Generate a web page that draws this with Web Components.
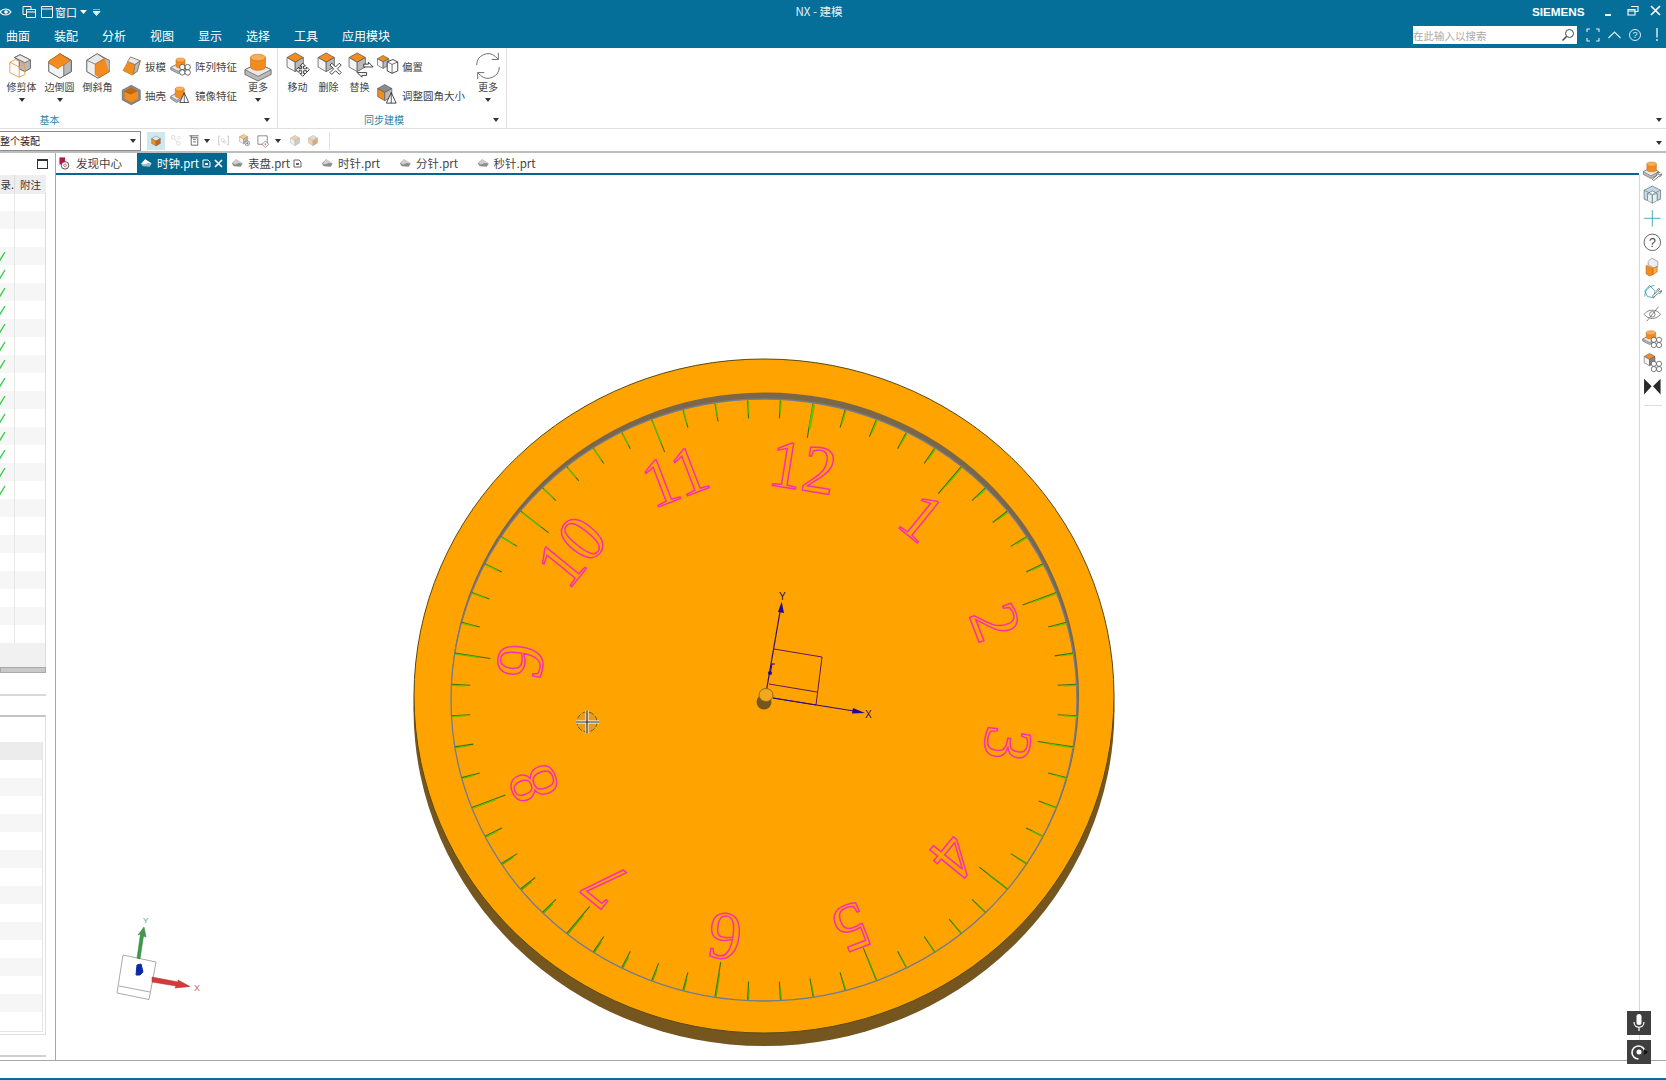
<!DOCTYPE html>
<html lang="zh">
<head>
<meta charset="utf-8">
<title>NX - 建模</title>
<style>
  html, body { margin: 0; height: 100%; background: #fff; overflow: hidden; }
  body { font-family: "Noto Sans CJK SC", "Noto Sans", sans-serif; font-size: 10px; color: #333; }
</style>
</head>
<body>
<nx-app></nx-app>
<script>
// colours shared by the icon drawings
const OR = '#f28c1e', ORL = '#f9ad55', ORD = '#c4680f', GL = '#e8e8e8', GM = '#b9b9b9', GD = '#8a8a8a', LN = '#555';

function hexPts(x, y, s) {
  const w = s * 0.87, h = s * 0.5;
  return { T: [x, y - s], UR: [x + w, y - h], LR: [x + w, y + h], B: [x, y + s], LL: [x - w, y + h], UL: [x - w, y - h], C: [x, y] };
}
const poly = (pts, fill, stroke = LN, sw = 0.8) =>
  `<polygon points="${pts.map(p => p.join(',')).join(' ')}" fill="${fill}" stroke="${stroke}" stroke-width="${sw}" stroke-linejoin="round"/>`;
function cube(x, y, s, top = OR, left = '#f4f4f4', right = GM, stroke = LN) {
  const p = hexPts(x, y, s);
  return poly([p.T, p.UR, p.C, p.UL], top, stroke) + poly([p.UL, p.C, p.B, p.LL], left, stroke) + poly([p.C, p.UR, p.LR, p.B], right, stroke);
}
function cyl(x, y, rx, h) {
  const ry = rx * 0.45;
  return `<path d="M${x - rx} ${y}v${h}a${rx} ${ry} 0 0 0 ${rx * 2} 0v${-h}z" fill="${OR}" stroke="${ORD}" stroke-width=".6"/>` +
    `<ellipse cx="${x}" cy="${y}" rx="${rx}" ry="${ry}" fill="${ORL}" stroke="${ORD}" stroke-width=".6"/>`;
}
function plate(x, y, w, h, d = 3) {
  return `<path d="M${x - w} ${y}L${x} ${y - h}L${x + w} ${y}v${d}L${x} ${y + h + d}L${x - w} ${y + d}z" fill="${GM}" stroke="${LN}" stroke-width=".8" stroke-linejoin="round"/>` +
    `<path d="M${x - w} ${y}L${x} ${y - h}L${x + w} ${y}L${x} ${y + h}z" fill="${GL}" stroke="${LN}" stroke-width=".7" stroke-linejoin="round"/>`;
}
const clover = (x, y, r) => [[-r, -r], [r, -r], [-r, r], [r, r]].map(d =>
  `<circle cx="${x + d[0]}" cy="${y + d[1]}" r="${r}" fill="#fff" stroke="#333" stroke-width=".9"/>`).join('');
const wrench = (x, y) => `<path d="M${x} ${y + 7}l7 -6a3 3 0 0 1 4 -4l-2 2 1 2 2 0 1 -2a3 3 0 0 1 -4 4l-7 6z" fill="#fff" stroke="#333" stroke-width=".9" stroke-linejoin="round"/>`;
const tri = (x, y) => `<path d="M${x} ${y - 7}L${x + 6} ${y + 6}H${x - 6}z" fill="#fff" stroke="#222" stroke-width="1"/><path d="M${x} ${y - 7}V${y + 6}" stroke="#222" stroke-width=".9"/>`;

const ICONS = {
  trim: `<path d="M3 11L14 5l11 6v9l-11 6-11-6z" fill="#fff"/>` +
    `<path d="M14 4l11 5.5v9L19 22l-6-3v-9l-5-3z" fill="${GM}" stroke="${LN}" stroke-width=".9"/><path d="M8 7l6-3 11 5.5-6 3z" fill="${GL}" stroke="${LN}" stroke-width=".8"/>` +
    `<path d="M3 12l6-3 10 5v11l-6 3-10-5zM3 12l10 5v11M13 17l6-3" fill="none" stroke="#ef9a4c" stroke-width="1"/>`,
  blend: `<path d="M16 3l12 7v12l-12 7-12-7V11z" fill="#f2f2f2" stroke="${LN}"/><path d="M16 3l12 7v12l-8 4.6V15z" fill="${GM}" stroke="${LN}" stroke-width=".8"/>` +
    `<path d="M16 3L5 10c-1 1 -1 2 -1 3c2 1 10 6 10 6c2 -2 3 -3 6 -4l7-5z" fill="${OR}" stroke="${ORD}" stroke-width=".7"/>`,
  chamfer: `<path d="M15 3l13 7v12l-12 7-12-7V10z" fill="#f0f0f0" stroke="${LN}"/><path d="M4 10l11-7 8 5-10 6z" fill="${GL}" stroke="${LN}" stroke-width=".7"/>` +
    `<path d="M23 8l5 3v11l-10 6-5-3V14z" fill="${OR}" stroke="${ORD}" stroke-width=".7"/><path d="M23 8l5 3v11z" fill="${GM}"/>`,
  draft: `<path d="M14 4l13 5-4 14-7 5-12-6z" fill="${OR}" stroke="${ORD}" stroke-width=".8"/><path d="M14 4l13 5-7 5-10-4z" fill="${GL}" stroke="${LN}" stroke-width=".7"/><path d="M27 9l-4 14-5 4 2-13z" fill="${GM}" stroke="${LN}" stroke-width=".7"/>`,
  shell: `<path d="M15 3l12 6.500v13L15 29 3 22.500v-13z" fill="${GD}" stroke="${LN}" stroke-width=".8"/><path d="M15 6l9 5v10l-9 5-9-5V11z" fill="${ORD}"/><path d="M15 15l9-4v10l-9 5-9-5V11z" fill="${OR}"/><path d="M6 11l9 4" stroke="#8a4a0a" stroke-width=".7"/>`,
  pattern: plate(11, 18, 10, 5) + cyl(14, 8, 6, 8) + clover(20, 21, 3.6),
  mirror: plate(9, 18, 8, 5) + cyl(13, 8, 6, 9) + tri(19, 20),
  more: plate(16, 20, 14, 7, 5) + cyl(16, 7, 8, 10),
  move: cube(13, 12, 10) + `<path d="M21 13l3 3h-2v3h3v-2l3 3-3 3v-2h-3v3h2l-3 3-3-3h2v-3h-3v2l-3-3 3-3v2h3v-3h-2z" fill="#fff" stroke="#222" stroke-width=".9" stroke-linejoin="round"/>`,
  del: cube(13, 12, 10) + `<path d="M17 15l2-2 4 4 4-4 2 2-4 4 4 4-2 2-4-4-4 4-2-2 4-4z" fill="#fff" stroke="#222" stroke-width=".9" stroke-linejoin="round"/>`,
  replace: cube(13, 12, 10) + `<path d="M20 14h5v-2l5 5-5 0h-5zM23 26h-5v2l-5-5 5 0h5z" fill="#fff" stroke="#222" stroke-width=".9" stroke-linejoin="round"/>`,
  offset: cube(10, 11, 8) + `<path d="M15 11l7-3 6 3v11l-7 3-6-3z" fill="#fff" stroke="#222"/><path d="M15 11l6 3 7-3M21 14v11" fill="none" stroke="#222" stroke-width=".8"/>`,
  resize: cube(12, 13, 10, GD, OR, GM) + tri(20, 20),
  refresh: `<path d="M4 15a12 12 0 0 1 20-9l3 3M28 17a12 12 0 0 1-20 9l-3-3" fill="none" stroke="#666" stroke-width="1"/><path d="M27 2v7h-7M5 30v-7h7" fill="none" stroke="#666" stroke-width="1"/>`,
  select: cube(16, 16, 10, '#e8e8e8', OR, ORD, '#666'),
  faint1: `<circle cx="9" cy="9" r="4" fill="none" stroke="#bbb"/><circle cx="20" cy="22" r="4" fill="none" stroke="#bbb"/><circle cx="21" cy="10" r="3" fill="none" stroke="#ccc"/><path d="M12 12l5 7" stroke="#bbb"/>`,
  sheet: `<path d="M5 6h20M9 6v20h14V10H9" fill="none" stroke="#333" stroke-width="1.500"/><path d="M13 14h6M13 19h6" stroke="#333" stroke-width="1.500"/>`,
  faint2: `<path d="M7 5H4v22h3M25 5h3v22h-3" fill="none" stroke="#aaa" stroke-width="1.500"/><circle cx="14" cy="15" r="4" fill="none" stroke="#c9a0a0"/><circle cx="19" cy="20" r="3" fill="none" stroke="#aaa"/>`,
  filterA: cube(14, 13, 10, '#f9c98f', '#f4f4f4', GM, '#a07030') + `<circle cx="22" cy="22" r="5" fill="#fff" stroke="#333"/><path d="M22 19v6M19 22h6" stroke="#333"/>`,
  filterB: `<path d="M4 6h20v18H4z" fill="#fff" stroke="#555" stroke-width="1.400"/><path d="M20 17l7 7-7 7-7-7z" fill="#fff" stroke="#333"/><circle cx="20" cy="24" r="2" fill="${OR}"/>`,
  ghost1: cube(15, 16, 11, '#f4d0a8', '#eee', '#ccc', '#aaa'),
  ghost2: cube(15, 16, 11, '#ddd', '#f4cfa6', '#e0a878', '#aaa'),
  discover: `<path d="M3 3h12v15H3z" fill="#b4154a"/><circle cx="15" cy="20" r="8" fill="#fff" stroke="#444" stroke-width="2"/><circle cx="15" cy="20" r="3" fill="none" stroke="#c33" stroke-width="1.500"/>`,
  part: `<path d="M13 7l14 9-4 7-15-1-4-6z" fill="#8d8d8d"/><path d="M13 7l14 9-8-1-9 3-4-2z" fill="#cfcfcf"/>`,
  partw: `<path d="M13 7l14 9-4 7-15-1-4-6z" fill="#9dbccb"/><path d="M13 7l14 9-8-1-9 3-4-2z" fill="#fff"/>`,
  // right strip
  rs1: plate(13, 17, 11, 6, 4) + cyl(14, 6, 7, 8) + wrench(15, 21),
  rs2: `<path d="M15 3l12 6v13l-5 2V14l-7-4-7 4v10l-5-2V9z" fill="#c7d6e6" stroke="#577" stroke-width="1"/><path d="M3 9l12 6 12-6" fill="none" stroke="#577" stroke-width=".9"/><path d="M8 14v10l7 4V16zM22 14v10l-7 4V16z" fill="#e8eef4" stroke="#577" stroke-width=".8"/>`,
  rs3: `<path d="M15 3v24M3 15h24" stroke="#2a9db0" stroke-width="1.200" fill="none"/>`,
  rs4: `<circle cx="15" cy="15" r="12" fill="#fff" stroke="#444" stroke-width="1.200"/><text x="15" y="21.500" text-anchor="middle" font-size="18" font-family="Liberation Sans, sans-serif" fill="#444">?</text>`,
  rs5: `<path d="M14 3l9 5v7l-5 3-9-5V8z" fill="#eee" stroke="#888"/><path d="M7 14l9 4v9l-5 2-5-3V14z" fill="${OR}" stroke="${ORD}"/><path d="M16 18l6-3v8l-6 4z" fill="${ORL}" stroke="${ORD}"/>`,
  rs6: `<path d="M4 24c0-9 6-15 14-16M8 24l-4-8M4 16l7-8 8 8-2 10-9-2" fill="none" stroke="#2a9db0" stroke-width="1.200"/>` + wrench(15, 16),
  rs7: `<path d="M3 15c6-8 18-8 24 0-6 8-18 8-24 0z" fill="#fff" stroke="#555"/><circle cx="15" cy="15" r="4" fill="none" stroke="#555"/><path d="M7 25L24 4" stroke="#555"/>`,
  rs8: plate(11, 16, 10, 5, 3) + cyl(13, 7, 7, 6) + clover(21, 21, 3.800),
  rs9: cube(11, 11, 9, OR, '#f4f4f4', GD) + clover(21, 21, 3.800),
  rs10: `<path d="M3 4l11 11L3 27zM27 4L16 15l11 12z" fill="#2a2a2a"/>`,
};

// one drawn icon; name picks the drawing, size the box in px
class NxIcon extends HTMLElement {
  connectedCallback() {
    const size = this.getAttribute('size') || 16;
    this.attachShadow({ mode: 'open' }).innerHTML = `
      <style>:host { display: inline-flex; flex: none; width: ${size}px; height: ${size}px; } svg { width: 100%; height: 100%; display: block; overflow: visible; }</style>
      <svg viewBox="0 0 32 32">${ICONS[this.getAttribute('name')] || ''}</svg>`;
  }
}
customElements.define('nx-icon', NxIcon);

class NxTitlebar extends HTMLElement {
  connectedCallback() {
    const menu = ['曲面', '装配', '分析', '视图', '显示', '选择', '工具', '应用模块'];
    this.attachShadow({ mode: 'open' }).innerHTML = `
      <style>
        :host { display: block; height: 48px; background: #056f99; color: #fff; font-size: 12px; position: relative; }
        .top { height: 24px; display: flex; align-items: center; position: relative; }
        .qa { display: flex; align-items: center; font-size: 11px; }
        .qa svg { display: block; }
        .title { position: absolute; left: 0; right: 0; text-align: center; font-size: 11.500px; color: #e6f0f4; pointer-events: none; top: 3px; padding-right: 28px; }
        .brand { position: absolute; left: 1532px; top: 5px; font: bold 11.700px "Liberation Sans", sans-serif; }
        .win { position: absolute; left: 1603px; top: 3px; display: flex; gap: 9px; }
        .menu { display: flex; height: 22px; align-items: center; padding-left: 6px; gap: 24px; }
        .menu span { white-space: nowrap; }
        .right { position: absolute; left: 1413px; top: 26px; display: flex; align-items: center; }
        .search { width: 164px; height: 18px; background: #fff; box-sizing: border-box; display: flex; align-items: center; justify-content: space-between; font-size: 10.500px; color: #aaa; padding-right: 2px; }
        .tools { display: flex; align-items: center; margin-left: 9px; gap: 5px; }
      </style>
      <div class="top">
        <div class="qa">
          <svg width="14" height="14" viewBox="0 0 14 14"><path d="M0 7c3-4 8-4 11 0-3 4-8 4-11 0z" fill="none" stroke="#fff" stroke-width="1.200"/><circle cx="6" cy="7" r="1.800" fill="#fff"/></svg>
          <svg width="16" height="14" viewBox="0 0 16 14" style="margin-left:7px"><path d="M2 1.500h8v3M2 1.500v8h3M5.500 4.500h9v8h-9zM5.500 7h9" fill="none" stroke="#fff"/></svg>
          <svg width="14" height="14" viewBox="0 0 14 14" style="margin-left:3px"><path d="M1.500 1.500h11v11h-11zM1.500 4h11" fill="none" stroke="#fff"/></svg>
          <span style="margin-left:1px">窗口</span>
          <svg width="7" height="5" viewBox="0 0 7 5" style="margin-left:3px"><path d="M0 0h7L3.500 4z" fill="#fff"/></svg>
          <svg width="8" height="7" viewBox="0 0 8 7" style="margin-left:6px"><path d="M0 0h7M0 2.500h7L3.500 6.500z" fill="none" stroke="#fff"/><path d="M1 3h5L3.500 6z" fill="#fff"/></svg>
        </div>
        <div class="title">NX - 建模</div>
        <div class="brand">SIEMENS</div>
        <div class="win">
          <svg width="14" height="16" viewBox="0 0 14 16"><path d="M2 12h6" stroke="#fff" stroke-width="2"/></svg>
          <svg width="14" height="16" viewBox="0 0 14 16"><path d="M5 3.500h7v5h-3M2 6.500h7v5.500H2zM2 8h7" fill="none" stroke="#fff" stroke-width="1.100"/></svg>
          <svg width="14" height="16" viewBox="0 0 14 16"><path d="M2 3l9 9M11 3l-9 9" stroke="#fff" stroke-width="1.700"/></svg>
        </div>
      </div>
      <div class="menu">${menu.map(m => `<span>${m}</span>`).join('')}</div>
      <div class="right">
        <div class="search"><span>在此输入以搜索</span>
          <svg width="14" height="14" viewBox="0 0 14 14"><circle cx="8.500" cy="5.500" r="4" fill="#fff" stroke="#444"/><path d="M5.500 8.500L1.500 12.500" stroke="#444" stroke-width="1.500"/></svg>
        </div>
        <div class="tools">
          <svg width="14" height="14" viewBox="0 0 14 14"><path d="M1 4V1h3M10 1h3v3M13 10v3h-3M4 13H1v-3" fill="none" stroke="#e0eef4" stroke-width="1.100"/></svg>
          <svg width="15" height="14" viewBox="0 0 15 14" style="margin-left:2px"><path d="M1.500 10L7.500 4l6 6" fill="none" stroke="#e0eef4" stroke-width="1.100"/></svg>
          <svg width="14" height="14" viewBox="0 0 14 14" style="margin-left:1px"><circle cx="7" cy="7" r="5.500" fill="none" stroke="#e0eef4"/><text x="7" y="10" font-size="9" text-anchor="middle" fill="#e0eef4" font-family="Liberation Sans, sans-serif">?</text></svg>
          <svg width="6" height="14" viewBox="0 0 6 14" style="margin-left:7px"><path d="M3 0v9.500M3 11v2" stroke="#e0eef4" stroke-width="1.400"/></svg>
        </div>
      </div>`;
  }
}
customElements.define('nx-titlebar', NxTitlebar);

// big ribbon button: icon on top, label under it, optional caret
class NxTool extends HTMLElement {
  connectedCallback() {
    const caret = this.hasAttribute('caret');
    this.attachShadow({ mode: 'open' }).innerHTML = `
      <style>
        :host { display: flex; flex-direction: column; align-items: center; flex: none; font-size: 10px; color: #444; }
        .lb { margin-top: -1px; line-height: 14px; white-space: nowrap; }
        .c { width: 0; height: 0; border: 3px solid transparent; border-top: 4px solid #333; border-bottom: 0; margin-top: 4px; }
      </style>
      <nx-icon name="${this.getAttribute('icon')}" size="${this.getAttribute('size') || 30}"></nx-icon>
      <div class="lb"><slot></slot></div>
      ${caret ? '<div class="c"></div>' : ''}`;
  }
}
customElements.define('nx-tool', NxTool);

// small ribbon button: icon left, label right
class NxSmallTool extends HTMLElement {
  connectedCallback() {
    this.attachShadow({ mode: 'open' }).innerHTML = `
      <style>
        :host { display: flex; align-items: center; gap: 1px; font-size: 10.500px; color: #444; height: 22px; white-space: nowrap; }
      </style>
      <nx-icon name="${this.getAttribute('icon')}" size="${this.getAttribute('size') || 24}"></nx-icon>
      <slot></slot>`;
  }
}
customElements.define('nx-small-tool', NxSmallTool);

class NxGroup extends HTMLElement {
  connectedCallback() {
    this.attachShadow({ mode: 'open' }).innerHTML = `
      <style>
        :host { display: flex; flex-direction: column; box-sizing: border-box; height: 80px; width: ${this.getAttribute('w')}px; border-right: 1px solid #e2e2e2; position: relative; flex: none; }
        .body { flex: 1; display: flex; align-items: flex-start; padding-top: 3px; padding-left: ${this.getAttribute('pad') || 0}px; }
        .lb { height: 15px; line-height: 13px; text-align: center; color: #2f84a6; font-size: 10px; padding-right: ${this.getAttribute('lbpad') || 0}px; }
        .c { position: absolute; right: 7px; bottom: 6px; border: 3px solid transparent; border-top: 4px solid #333; border-bottom: 0; }
      </style>
      <div class="body"><slot></slot></div>
      <div class="lb">${this.getAttribute('label')}</div>
      <div class="c"></div>`;
  }
}
customElements.define('nx-group', NxGroup);

class NxRibbon extends HTMLElement {
  connectedCallback() {
    this.attachShadow({ mode: 'open' }).innerHTML = `
      <style>
        :host { display: flex; height: 81px; box-sizing: border-box; border-bottom: 1px solid #e0e0e0; background: #fff; position: relative; }
        .stack { display: flex; flex-direction: column; gap: 7px; padding-top: 4px; flex: none; }
        .c { position: absolute; right: 4px; bottom: 6px; border: 3px solid transparent; border-top: 4px solid #333; border-bottom: 0; }
      </style>
      <nx-group w="278" label="基本" pad="6" lbpad="178">
        <nx-tool icon="trim" caret style="width:31px">修剪体</nx-tool>
        <nx-tool icon="blend" caret style="width:31px;margin-left:7px">边倒圆</nx-tool>
        <nx-tool icon="chamfer" style="width:31px;margin-left:7px">倒斜角</nx-tool>
        <div class="stack" style="margin-left:7px;width:53px">
          <nx-small-tool icon="draft">拔模</nx-small-tool>
          <nx-small-tool icon="shell">抽壳</nx-small-tool>
        </div>
        <div class="stack" style="margin-left:-3px;width:66px">
          <nx-small-tool icon="pattern">阵列特征</nx-small-tool>
          <nx-small-tool icon="mirror">镜像特征</nx-small-tool>
        </div>
        <nx-tool icon="more" caret style="width:22px;margin-left:11px">更多</nx-tool>
      </nx-group>
      <nx-group w="229" label="同步建模" pad="7" lbpad="16">
        <nx-tool icon="move" style="width:25px">移动</nx-tool>
        <nx-tool icon="del" style="width:25px;margin-left:6px">删除</nx-tool>
        <nx-tool icon="replace" style="width:25px;margin-left:6px">替换</nx-tool>
        <div class="stack" style="margin-left:3px;width:102px">
          <nx-small-tool icon="offset" size="26">偏置</nx-small-tool>
          <nx-small-tool icon="resize" size="26">调整圆角大小</nx-small-tool>
        </div>
        <nx-tool icon="refresh" caret style="width:22px">更多</nx-tool>
      </nx-group>
      <div class="c"></div>`;
  }
}
customElements.define('nx-ribbon', NxRibbon);

class NxToolbar extends HTMLElement {
  connectedCallback() {
    this.attachShadow({ mode: 'open' }).innerHTML = `
      <style>
        :host { display: flex; align-items: center; height: 24px; box-sizing: border-box; border-bottom: 2px solid #bdbdbd; padding-top: 1px; position: relative; background: #fff; }
        .combo { width: 141px; height: 20px; box-sizing: border-box; border: 1px solid #8c8c8c; border-left: 0; font-size: 10px; line-height: 18px; color: #222; position: relative; }
        .combo i, .car, .end { border: 3px solid transparent; border-top: 4px solid #333; border-bottom: 0; display: block; }
        .combo i { position: absolute; right: 4px; top: 7px; }
        .items { display: flex; align-items: center; margin-left: 6px; }
        .hi { background: #cfe8f0; width: 18px; height: 18px; display: flex; align-items: center; justify-content: center; }
        .sep { width: 1px; height: 18px; background: #e2e2e2; margin-left: 8px; }
        .end { position: absolute; right: 4px; top: 12px; }
      </style>
      <div class="combo">整个装配<i></i></div>
      <div class="items">
        <div class="hi"><nx-icon name="select" size="16"></nx-icon></div>
        <nx-icon name="faint1" size="15" style="margin-left:4px"></nx-icon>
        <nx-icon name="sheet" size="15" style="margin-left:3px"></nx-icon>
        <div class="car" style="margin-left:2px"></div>
        <nx-icon name="faint2" size="13" style="margin-left:7px"></nx-icon>
        <nx-icon name="filterA" size="15" style="margin-left:7px"></nx-icon>
        <nx-icon name="filterB" size="15" style="margin-left:4px"></nx-icon>
        <div class="car" style="margin-left:4px"></div>
        <nx-icon name="ghost1" size="15" style="margin-left:7px"></nx-icon>
        <nx-icon name="ghost2" size="15" style="margin-left:3px"></nx-icon>
        <div class="sep"></div>
      </div>
      <div class="end"></div>`;
  }
}
customElements.define('nx-toolbar', NxToolbar);

class NxTabs extends HTMLElement {
  connectedCallback() {
    const tabs = [
      { t: '发现中心', i: 'discover', w: 81, pl: 2 },
      { t: '时钟.prt', i: 'partw', w: 90, pl: 2, on: 1, extra: 1 },
      { t: '表盘.prt', i: 'part', w: 88, pl: 3, mark: 1 },
      { t: '时针.prt', i: 'part', w: 78, pl: 5 },
      { t: '分针.prt', i: 'part', w: 77.5, pl: 5 },
      { t: '秒针.prt', i: 'part', w: 78, pl: 5 },
    ];
    this.attachShadow({ mode: 'open' }).innerHTML = `
      <style>
        :host { display: flex; height: 22px; box-sizing: border-box; border-bottom: 2px solid #05678e; font-size: 11.500px; color: #444; background: #fff; }
        .tab { display: flex; align-items: center; box-sizing: border-box; height: 20px; gap: 3px; white-space: nowrap; flex: none; }
        .on { background: #05678e; color: #fff; }
        svg { display: block; }
      </style>
      ${tabs.map(t => `
        <div class="tab ${t.on ? 'on' : ''}" style="width:${t.w}px;padding-left:${t.pl}px">
          <nx-icon name="${t.i}" size="15"></nx-icon><span>${t.t}</span>
          ${t.on || t.mark ? `<svg width="9" height="9" viewBox="0 0 9 9"><path d="M1 1h5l2 2v5H1z" fill="none" stroke="${t.on ? '#fff' : '#666'}"/><path d="M3 4h3v2H3z" fill="${t.on ? '#fff' : '#666'}"/></svg>` : ''}
          ${t.extra ? `<svg width="9" height="9" viewBox="0 0 9 9"><path d="M1 1l7 7M8 1l-7 7" stroke="#fff" stroke-width="1.600"/></svg>` : ''}
        </div>`).join('')}`;
  }
}
customElements.define('nx-tabs', NxTabs);

class NxNavPanel extends HTMLElement {
  connectedCallback() {
    const rows = [];
    for (let i = 0; i < 25; i++) {
      const check = i >= 3 && i <= 16;
      rows.push(`<div class="r ${i % 2 ? 'alt' : ''}"><div class="a">${check ? `<svg width="7" height="11" viewBox="0 0 7 11"><path d="M-2 8l1.500 2L5 1" fill="none" stroke="#39cf4d" stroke-width="1.400"/></svg>` : ''}</div><div class="b"></div></div>`);
    }
    const rows2 = [];
    for (let i = 0; i < 16; i++) rows2.push(`<div class="q ${i === 0 ? 'hi' : (i % 2 === 0 ? 'alt' : '')}"></div>`);
    this.attachShadow({ mode: 'open' }).innerHTML = `
      <style>
        :host { display: block; width: 56px; flex: none; box-sizing: border-box; border-right: 1px solid #a8a8a8; background: #fff; font-size: 11px; color: #333; height: 100%; }
        .head { height: 22px; display: flex; align-items: center; justify-content: flex-end; padding-right: 7px; box-sizing: border-box; }
        .max { width: 9px; height: 7px; border: 1px solid #333; border-top-width: 2px; }
        .cols, .r { width: 46px; display: flex; box-sizing: border-box; }
        .cols { height: 19px; background: #eee; line-height: 20px; font-size: 10.500px; margin-bottom: -1px; }
        .a { width: 14px; flex: none; border-right: 1px solid #e8e8e8; overflow: hidden; white-space: nowrap; display: flex; align-items: center; }
        .b { flex: 1; text-align: center; }
        .list { border-right: 1px solid #ddd; width: 46px; box-sizing: border-box; }
        .r { height: 18px; width: 45px; }
        .alt { background: #f6f6f6; }
        .foot { width: 46px; height: 24px; background: #f1f1f1; box-sizing: border-box; border-right: 1px solid #ddd; }
        .bar { width: 46px; height: 6px; background: #c8c8c8; border: 1px solid #aaa; box-sizing: border-box; }
        .rule { width: 46px; height: 2px; background: #d8d8d8; margin-top: 21px; }
        .box2 { width: 46px; height: 320px; margin-top: 19px; box-sizing: border-box; border: 1px solid #e0e0e0; border-left: 0; border-top: 2px solid #c4c4c4; padding-top: 25px; }
        .inner { width: 43px; height: 290px; border: 1px solid #e4e4e4; border-left: 0; border-top: 0; box-sizing: border-box; }
        .q { height: 18px; }
        .q.hi { background: #ececec; }
        .rule2 { width: 46px; height: 2px; background: #cfcfcf; margin-top: 20px; }
      </style>
      <div class="head"><div class="max"></div></div>
      <div class="cols"><div class="a" style="justify-content:flex-end;border-right-color:#ddd">录.</div><div class="b">附注</div></div>
      <div class="list">${rows.join('')}</div>
      <div class="foot"></div>
      <div class="bar"></div>
      <div class="rule"></div>
      <div class="box2"><div class="inner">${rows2.join('')}</div></div>
      <div class="rule2"></div>`;
  }
}
customElements.define('nx-nav-panel', NxNavPanel);

// the graphics window; the svg uses page coordinates through its viewBox
class NxViewport extends HTMLElement {
  connectedCallback() {
    const cx = 764, cy = 700, rx = 313, ry = 300;
    let ticks = '';
    for (let i = 0; i < 60; i++) {
      const a = (i * 6 + 9) * Math.PI / 180, hour = i % 5 === 0;
      const k = hour ? 0.885 : 0.94;
      const x1 = cx + rx * Math.sin(a), y1 = cy - ry * Math.cos(a);
      const x2 = cx + rx * k * Math.sin(a), y2 = cy - ry * k * Math.cos(a);
      ticks += `<line x1="${x1.toFixed(1)}" y1="${y1.toFixed(1)}" x2="${x2.toFixed(1)}" y2="${y2.toFixed(1)}" stroke="#2f7410" stroke-width="1.100"/>`;
      // the lit side of each tick, brightest on the upper half of the dial
      const lit = y1 < cy + 150 ? '#62c000' : '#4fa408';
      ticks += `<line x1="${(x1 + 0.8).toFixed(1)}" y1="${(y1 + 1).toFixed(1)}" x2="${((x1 * 0.3 + x2 * 0.7) + 0.6).toFixed(1)}" y2="${((y1 * 0.3 + y2 * 0.7) + 0.8).toFixed(1)}" stroke="${lit}" stroke-width="${i === 0 ? 2.4 : 1.300}"/>`;
    }
    const nums = [
      ['12', 803, 467], ['1', 922, 517], ['2', 996, 622], ['3', 1008, 744], ['4', 954, 857], ['5', 852, 928],
      ['6', 725, 937], ['7', 605, 885], ['8', 533, 784], ['9', 520, 661], ['10', 571, 551], ['11', 675, 476],
    ].map((n, i) => `<text transform="translate(${n[1]} ${n[2]}) rotate(${(i * 30 + 9)}) scale(.98 1)" y="23" text-anchor="middle">${n[0]}</text>`).join('');

    this.attachShadow({ mode: 'open' }).innerHTML = `
      <style>
        :host { display: block; flex: 1; min-height: 0; background: #fff; position: relative; }
        svg { display: block; width: 100%; height: 100%; }
        .num text { font: 68px "Liberation Serif", serif; fill: none; stroke: #f92eb0; stroke-width: 1.500; }
        .ax { font: 10px "Liberation Sans", sans-serif; }
      </style>
      <svg viewBox="56 175 1583 885">
        <ellipse cx="764" cy="709" rx="350.500" ry="337" fill="#75561f"/>
        <ellipse cx="764" cy="696" rx="350" ry="337" fill="#ffa300" stroke="#5a4a10" stroke-width="1"/>
        <ellipse cx="765" cy="696.500" rx="314" ry="304" fill="#7a6649"/>
        <ellipse cx="764" cy="700" rx="313" ry="301" fill="#ffa300" stroke="#707c94" stroke-width="1.300"/>
        <g>${ticks}</g>
        <g class="num">${nums}</g>

        <!-- work csys -->
        <g fill="none" stroke="#5d1766" stroke-width="1">
          <path d="M774 649L822 657L816 705M769 684L817 692M773 698L816 705"/>
        </g>
        <path d="M766 693L781 606" stroke="#2a0a8c" stroke-width="1.200"/>
        <path d="M781.700 601.700L784 613L778 612z" fill="#1d0a9c"/>
        <path d="M773 698L860 712" stroke="#2a0a8c" stroke-width="1.200"/>
        <path d="M865 713L852 713.500L853 708z" fill="#1d0a9c"/>
        <circle cx="770" cy="673" r="2" fill="#1d0a9c"/>
        <path d="M771 664h4M772 664l-1.500 8" stroke="#1d0a9c" fill="none"/>
        <text class="ax" x="779" y="600" fill="#1d0a6c">Y</text>
        <text class="ax" x="865" y="718" fill="#1d0a6c">X</text>
        <ellipse cx="764" cy="702" rx="7.500" ry="7.500" fill="#75561f"/>
        <ellipse cx="766" cy="695" rx="7" ry="6.500" fill="#f2a81e" stroke="#8a6a20" stroke-width="1"/>

        <!-- cursor -->
        <circle cx="587" cy="722" r="10" fill="#d59a2e" fill-opacity=".6" stroke="#6a5a30" stroke-dasharray="5 2"/>
        <path d="M587 710.500v23M576 722h23" stroke="#fff" stroke-width="3"/>
        <path d="M587 710.500v23M576 722h23" stroke="#222" stroke-width="1.200"/>

        <!-- view triad -->
        <path d="M123 955L156 962L149 999.500L117 993zM119 986L150 992" fill="none" stroke="#aaa"/>
        <path d="M137 958L140.500 934L138 935L144 927L146 937L143.500 936L140 959z" fill="#3d9a4c" stroke="#2f7a3c" stroke-width=".5"/>
        <path d="M137 965L141 964L143 972L140 975L139 975L138 975L136 975z" fill="#0a2aa8" stroke="#0a2aa8"/>
        <path d="M152 977L178 982L178 980L190 986.500L175 988L176 986L152 982z" fill="#d43a3a" stroke="#b52a2a" stroke-width=".5"/>
        <text class="ax" x="143" y="923" fill="#5a9a6a" style="font-size:8px">Y</text>
        <text class="ax" x="194" y="991" fill="#c66" style="font-size:9px">X</text>
      </svg>`;
  }
}
customElements.define('nx-viewport', NxViewport);

class NxStrip extends HTMLElement {
  connectedCallback() {
    const names = ['rs1', 'rs2', 'rs3', 'rs4', 'rs5', 'rs6', 'rs7', 'rs8', 'rs9', 'rs10'];
    this.attachShadow({ mode: 'open' }).innerHTML = `
      <style>
        :host { display: flex; flex-direction: column; align-items: center; width: 27px; flex: none; padding: 7px 0 0 1px; box-sizing: border-box; position: relative; gap: 2px; background: #fff; }
        :host::before { content: ""; position: absolute; left: 0; top: 22px; bottom: 0; width: 1px; background: #d8d8d8; }
        .rule { width: 18px; height: 1px; background: #ddd; margin-top: 5px; }
      </style>
      ${names.map(n => `<nx-icon name="${n}" size="22"></nx-icon>`).join('')}
      <div class="rule"></div>`;
  }
}
customElements.define('nx-strip', NxStrip);

// the two dark buttons that float over the corner of the graphics window
class NxFloatButtons extends HTMLElement {
  connectedCallback() {
    this.attachShadow({ mode: 'open' }).innerHTML = `
      <style>
        :host { position: absolute; left: 1627px; top: 1011px; display: flex; flex-direction: column; gap: 5px; }
        .b { width: 24px; height: 24px; background: #3f3f3f; display: flex; align-items: center; justify-content: center; }
      </style>
      <div class="b"><svg width="16" height="18" viewBox="0 0 16 18"><rect x="5.500" y="0" width="5" height="11" rx="2.500" fill="#fff"/><path d="M3 8c0 7 10 7 10 0M8 13v4" fill="none" stroke="#fff" stroke-width="1.200"/></svg></div>
      <div class="b"><svg width="18" height="18" viewBox="0 0 18 18"><path d="M15 9a6.500 6.500 0 1 0-6.500 7" fill="none" stroke="#fff" stroke-width="1.600"/><circle cx="9" cy="9" r="2.500" fill="#fff"/><path d="M18 9l-4-3v6z" fill="#111"/></svg></div>`;
  }
}
customElements.define('nx-float-buttons', NxFloatButtons);

class NxApp extends HTMLElement {
  connectedCallback() {
    this.attachShadow({ mode: 'open' }).innerHTML = `
      <style>
        :host { display: flex; flex-direction: column; width: 1666px; height: 1080px; position: relative; overflow: hidden; background: #fff; }
        .main { flex: 1; min-height: 0; display: flex; }
        .work { flex: 1; min-width: 0; display: flex; flex-direction: column; }
        .status { height: 20px; box-sizing: border-box; border-top: 1px solid #a8a8a8; border-bottom: 2px solid #056f99; background: #fff; }
      </style>
      <nx-titlebar></nx-titlebar>
      <nx-ribbon></nx-ribbon>
      <nx-toolbar></nx-toolbar>
      <div class="main">
        <nx-nav-panel></nx-nav-panel>
        <div class="work"><nx-tabs></nx-tabs><nx-viewport></nx-viewport></div>
        <nx-strip></nx-strip>
      </div>
      <div class="status"></div>
      <nx-float-buttons></nx-float-buttons>`;
  }
}
customElements.define('nx-app', NxApp);
</script>
</body>
</html>
